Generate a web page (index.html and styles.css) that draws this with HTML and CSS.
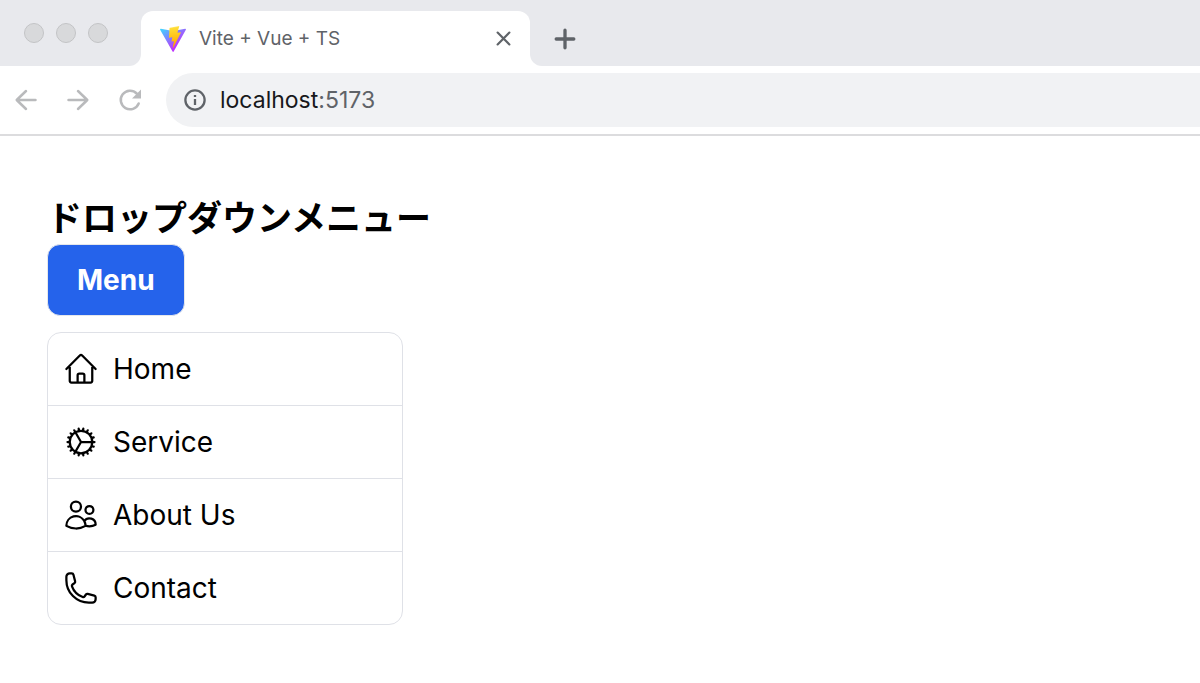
FILE: index.html
```html
<!DOCTYPE html>
<html lang="ja">
<head>
    <meta charset="UTF-8">
    <meta name="viewport" content="width=device-width, initial-scale=1.0">
    <title>Vite + Vue + TS</title>
    <link rel="stylesheet" href="styles.css">
</head>
<body>
    <header class="browser">
        <div class="tab-strip">
            <div class="window-controls">
                <span class="dot"></span>
                <span class="dot"></span>
                <span class="dot"></span>
            </div>
            <div class="tab-wrap">
                <div class="tab">
                    <svg class="favicon" viewBox="0 0 256 257" aria-hidden="true">
                        <defs>
                            <linearGradient id="vite-a" x1="-.8%" x2="57.6%" y1="7.7%" y2="78.4%">
                                <stop offset="0%" stop-color="#41d1ff"/>
                                <stop offset="100%" stop-color="#bd34fe"/>
                            </linearGradient>
                            <linearGradient id="vite-b" x1="43.4%" x2="50.3%" y1="2.2%" y2="89%">
                                <stop offset="0%" stop-color="#ffea83"/>
                                <stop offset="8.3%" stop-color="#ffdd35"/>
                                <stop offset="100%" stop-color="#ffa800"/>
                            </linearGradient>
                        </defs>
                        <path fill="url(#vite-a)" d="M255.153 37.938L134.897 252.976c-2.483 4.44-8.862 4.466-11.382.048L.875 37.958c-2.746-4.814 1.371-10.646 6.827-9.67l120.385 21.517a6.537 6.537 0 0 0 2.322-.004l117.867-21.483c5.438-.991 9.574 4.796 6.877 9.62Z"/>
                        <path fill="url(#vite-b)" d="M185.432.063L96.44 17.501a3.268 3.268 0 0 0-2.634 3.014l-5.474 92.456a3.268 3.268 0 0 0 3.997 3.378l24.777-5.718c2.318-.535 4.413 1.507 3.936 3.838l-7.361 36.047c-.495 2.426 1.782 4.5 4.151 3.78l15.304-4.649c2.372-.72 4.652 1.36 4.15 3.788l-11.698 56.621c-.732 3.542 3.979 5.473 5.943 2.437l1.313-2.028l72.516-144.72c1.215-2.423-.88-5.186-3.54-4.672l-25.505 4.922c-2.396.462-4.435-1.77-3.759-4.114l16.646-57.705c.677-2.35-1.37-4.583-3.769-4.113Z"/>
                    </svg>
                    <span class="tab-title">Vite + Vue + TS</span>
                    <button class="tab-close" type="button" aria-label="Close tab">
                        <svg viewBox="0 0 14 14"><path d="M1.500 1.500l11 11M12.500 1.500l-11 11"/></svg>
                    </button>
                </div>
            </div>
            <div class="strip-rest">
                <button class="new-tab" type="button" aria-label="New tab">
                    <svg viewBox="0 0 20 20"><path d="M10 2v16M2 10h16"/></svg>
                </button>
            </div>
        </div>
        <div class="toolbar">
            <div class="nav-buttons">
                <button type="button" aria-label="Back">
                    <svg viewBox="0 0 24 24"><path d="M21.500 12H3M12 3l-9.300 9 9.300 9"/></svg>
                </button>
                <button type="button" aria-label="Forward">
                    <svg viewBox="0 0 24 24"><path d="M2.500 12H21M12 3l9.300 9-9.300 9"/></svg>
                </button>
                <button type="button" aria-label="Reload">
                    <svg viewBox="0 0 24 24"><path d="M20.700 15.500A9.300 9.300 0 1 1 18.700 5.500"/><path class="solid" d="M23 1.500V10.500h-9z"/></svg>
                </button>
            </div>
            <div class="address">
                <svg viewBox="0 0 24 24" aria-hidden="true">
                    <circle cx="12" cy="12" r="10.500"/>
                    <path class="info-mark" d="M12 11v6.500M12 6.500v2.300"/>
                </svg>
                <span><span class="host">localhost</span>:5173</span>
            </div>
        </div>
    </header>

    <main class="page">
        <h1>ドロップダウンメニュー</h1>
        <button class="menu-btn" type="button">Menu</button>
        <ul class="menu">
            <li>
                <a href="#">
                    <svg viewBox="0 0 24 24" aria-hidden="true"><path d="M2.25 12l8.954-8.955c.44-.439 1.152-.439 1.591 0L21.75 12M4.5 9.75v10.125c0 .621.504 1.125 1.125 1.125H9.75v-4.875c0-.621.504-1.125 1.125-1.125h2.25c.621 0 1.125.504 1.125 1.125V21h4.125c.621 0 1.125-.504 1.125-1.125V9.75M8.25 21h8.25"/></svg>
                    Home
                </a>
            </li>
            <li>
                <a href="#">
                    <svg viewBox="0 0 24 24" aria-hidden="true"><path d="M4.5 12a7.5 7.5 0 0015 0m-15 0a7.5 7.5 0 1115 0m-15 0H3m16.5 0H21m-1.5 0H12m-8.457 3.077l1.41-.513m14.095-5.13l1.41-.513M5.106 17.785l1.15-.964m11.49-9.642l1.149-.964M7.501 19.795l.75-1.3m7.5-12.99l.75-1.3m-6.063 16.658l.26-1.477m2.605-14.772l.26-1.477m0 17.726l-.26-1.477M10.698 4.614l-.26-1.477M16.5 19.794l-.75-1.299M7.5 4.205L12 12m6.894 5.785l-1.149-.964M6.256 7.178l-1.15-.964m15.352 8.864l-1.41-.513M4.954 9.435l-1.41-.514M12.002 12l-3.75 6.495"/></svg>
                    Service
                </a>
            </li>
            <li>
                <a href="#">
                    <svg viewBox="0 0 24 24" aria-hidden="true"><path d="M15 19.128a9.38 9.38 0 002.625.372 9.337 9.337 0 004.121-.952 4.125 4.125 0 00-7.533-2.493M15 19.128v-.003c0-1.113-.285-2.16-.786-3.07M15 19.128v.106A12.318 12.318 0 018.624 21c-2.331 0-4.512-.645-6.374-1.766l-.001-.109a6.375 6.375 0 0111.964-3.07M12 6.375a3.375 3.375 0 11-6.75 0 3.375 3.375 0 016.75 0zm8.25 2.25a2.625 2.625 0 11-5.25 0 2.625 2.625 0 015.25 0z"/></svg>
                    About Us
                </a>
            </li>
            <li>
                <a href="#">
                    <svg viewBox="0 0 24 24" aria-hidden="true"><path d="M2.25 6.75c0 8.284 6.716 15 15 15h2.25a2.25 2.25 0 002.25-2.25v-1.372c0-.516-.351-.966-.852-1.091l-4.423-1.106c-.44-.11-.902.055-1.173.417l-.97 1.293c-.282.376-.769.542-1.21.38a12.035 12.035 0 01-7.143-7.143c-.162-.441.004-.928.38-1.21l1.293-.97c.363-.271.527-.734.417-1.173L6.963 3.102a1.125 1.125 0 00-1.091-.852H4.5A2.25 2.25 0 002.25 4.5v2.25z"/></svg>
                    Contact
                </a>
            </li>
        </ul>
    </main>
</body>
</html>
```
FILE: styles.css
```css
* {
    box-sizing: border-box;
    margin: 0;
    padding: 0;
}

body {
    background: #fff;
    color: #000;
    font-family: Inter, 'Noto Sans CJK JP', sans-serif;
}

button {
    border: none;
    background: none;
    font-family: inherit;
    cursor: pointer;
}

svg {
    display: block;
    flex: none;
    fill: none;
    stroke: currentColor;
    stroke-linecap: round;
    stroke-linejoin: round;
}

/* browser window */
.browser {
    border-bottom: 2px solid #dcdcde;
}

.tab-strip {
    display: flex;
    height: 66px;
}

.window-controls {
    display: flex;
    gap: 12px;
    width: 141px;
    padding: 23px 0 0 24px;
    background: #e8e9ed;
    border-bottom-right-radius: 12px;
}

.dot {
    width: 20px;
    height: 20px;
    border: 1px solid #c3c4c6;
    border-radius: 50%;
    background: #d8d9db;
}

.tab-wrap {
    width: 389px;
    padding-top: 11px;
    background: #e8e9ed;
}

.tab {
    display: flex;
    align-items: center;
    height: 55px;
    padding: 0 19px;
    border-radius: 12px 12px 0 0;
    background: #fff;
    color: #5f6368;
}

.favicon {
    width: 26px;
    height: 26px;
    stroke: none;
}

.tab-title {
    flex: 1;
    margin-left: 13px;
    font-size: 19px;
}

.tab-close svg {
    width: 15px;
    height: 15px;
    stroke: #5f6368;
    stroke-width: 2;
}

.strip-rest {
    flex: 1;
    display: flex;
    padding: 11px 24px 0;
    background: #e8e9ed;
    border-bottom-left-radius: 12px;
}

.new-tab svg {
    width: 22px;
    height: 22px;
    stroke: #5f6368;
    stroke-width: 3;
}

.toolbar {
    display: flex;
    align-items: center;
    padding: 7px 0;
}

.nav-buttons {
    display: flex;
    gap: 28px;
    width: 166px;
    padding-left: 14px;
}

.nav-buttons svg {
    width: 24px;
    height: 24px;
    stroke: #b9babc;
    stroke-width: 2.5;
}

.nav-buttons .solid {
    fill: #b9babc;
    stroke: none;
}

.address {
    flex: 1;
    display: flex;
    align-items: center;
    gap: 14px;
    height: 54px;
    padding-left: 18px;
    border-radius: 27px 0 0 27px;
    background: #f1f2f4;
    color: #5f6368;
    font-size: 23px;
}

.address svg {
    width: 22px;
    height: 22px;
    stroke-width: 2.5;
    overflow: visible;
}

.address .info-mark {
    stroke-linecap: butt;
}

.host {
    color: #17181b;
}

/* page */
.page {
    padding: 56px 47px;
}

h1 {
    font-size: 35px;
    font-weight: 700;
    line-height: 52px;
}

.menu-btn {
    display: block;
    height: 72px;
    padding: 0 29px;
    border: 1px solid #e5e7eb;
    border-radius: 13px;
    background: #2563eb;
    color: #fff;
    font-size: 28px;
    font-weight: 700;
}

.menu {
    width: 100%;
    max-width: 356px;
    margin-top: 16px;
    border: 1px solid #dfe1e7;
    border-radius: 14px;
    list-style: none;
}

.menu li + li {
    border-top: 1px solid #dfe1e7;
}

.menu a {
    display: flex;
    align-items: center;
    gap: 14px;
    height: 72px;
    padding: 0 15px;
    color: #000;
    font-size: 28px;
    text-decoration: none;
}

.menu svg {
    width: 36px;
    height: 36px;
    stroke-width: 1.5;
}
```
